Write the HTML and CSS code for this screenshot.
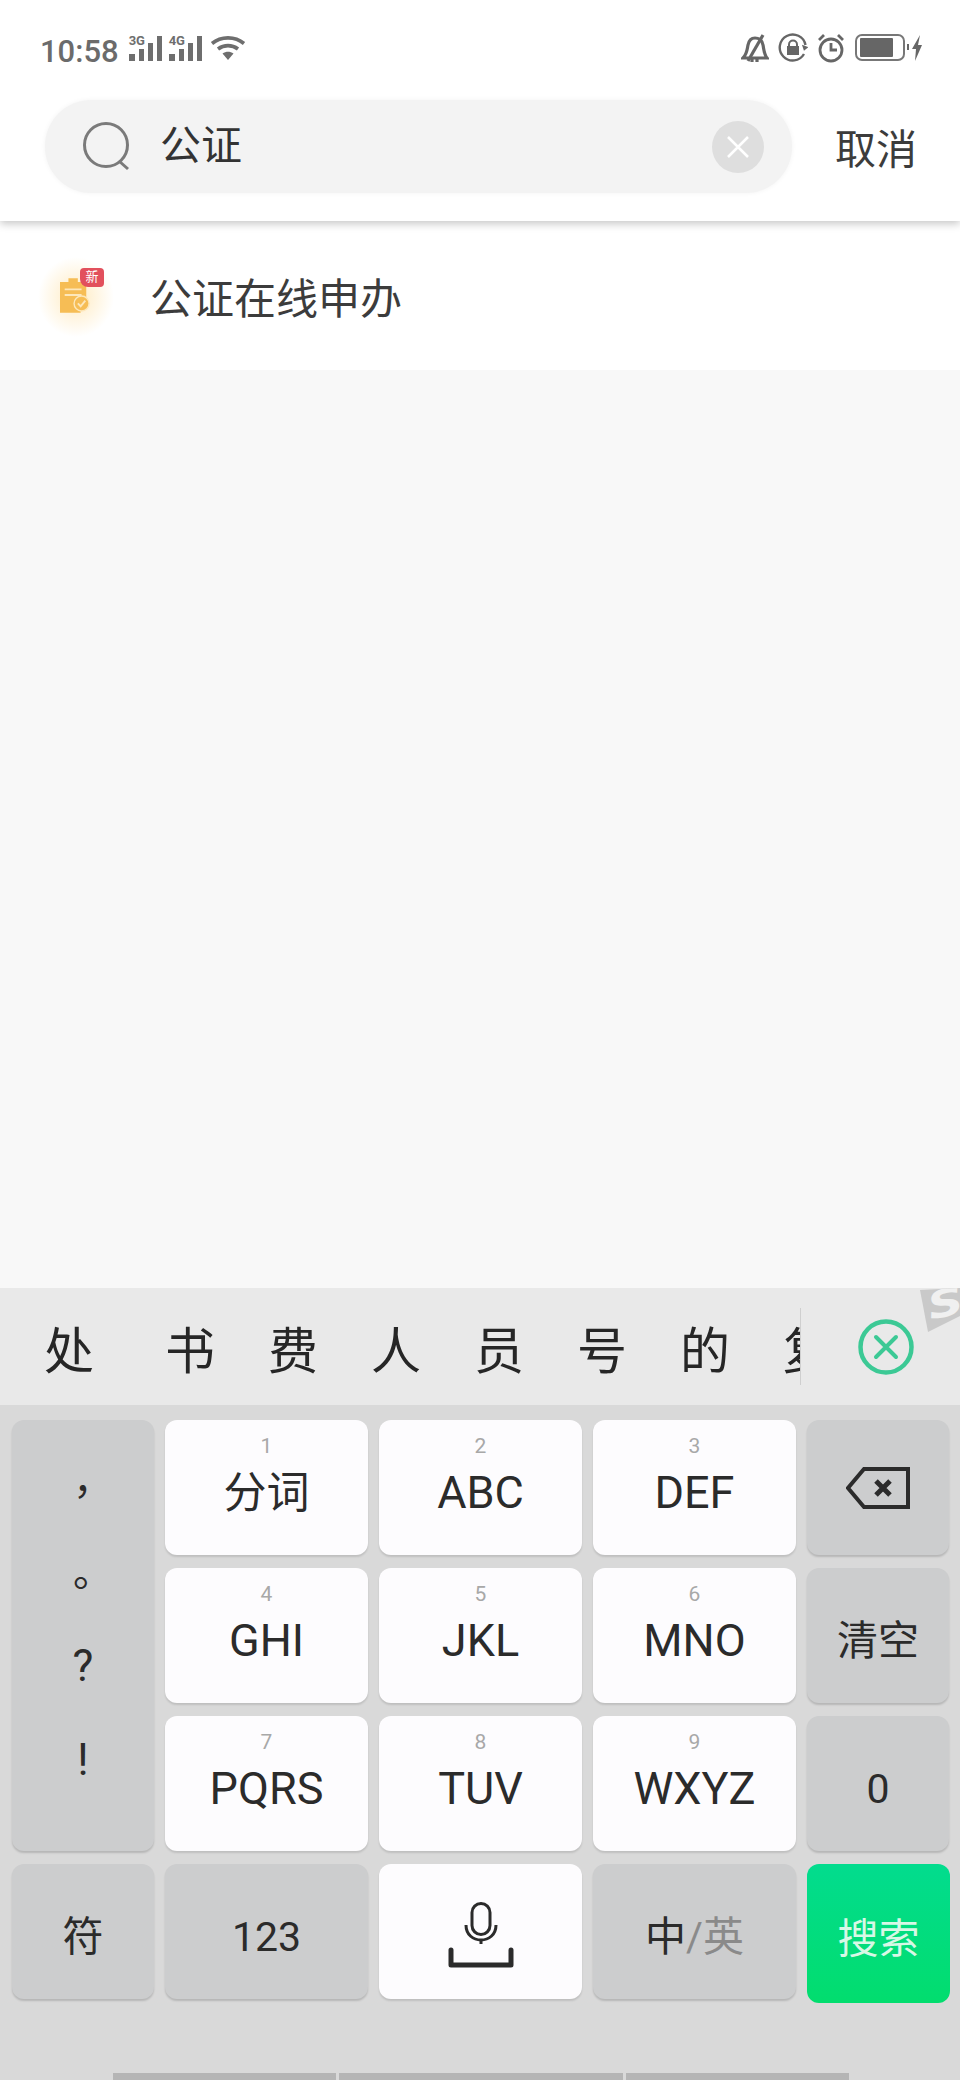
FILE: index.html
```html
<!DOCTYPE html>
<html lang="zh-CN">
<head>
  <meta charset="UTF-8" />
  <title>搜索</title>
  <link rel="stylesheet" href="styles.css">
</head>
<body>
  <div class="phone">
    <!-- Status bar and search box -->
    <header class="header">
      <div class="status">
        <div class="status-left">
          <span class="time">10:58</span>
          <span class="signal">
            <span class="net">3G</span>
            <svg width="33" height="25" viewBox="0 0 33 25"><g fill="#6e6e6e"><rect x="0" y="18" width="6" height="7"/><rect x="10" y="13" width="5" height="12"/><rect x="19" y="7" width="5" height="18"/><rect x="28" y="0" width="5" height="25"/></g></svg>
          </span>
          <span class="signal">
            <span class="net">4G</span>
            <svg width="33" height="25" viewBox="0 0 33 25"><g fill="#6e6e6e"><rect x="0" y="18" width="6" height="7"/><rect x="10" y="13" width="5" height="12"/><rect x="19" y="7" width="5" height="18"/><rect x="28" y="0" width="5" height="25"/></g></svg>
          </span>
          <svg class="wifi" width="36" height="26" viewBox="0 0 36 26"><g fill="none" stroke="#6e6e6e" stroke-width="3.600"><path d="M2 8.500C11 1 25 1 34 8.500"/><path d="M8 14C14 9.500 22 9.500 28 14"/></g><path d="M12.500 18.500C16 16 20 16 23.500 18.500L18 25Z" fill="#6e6e6e"/></svg>
        </div>
        <div class="status-right">
          <svg width="28" height="30" viewBox="0 0 28 30"><g fill="none" stroke="#666" stroke-width="3.200"><path d="M2 25C6 21 6 17 7 12C8 7 11 5 14 5C18 5 21 7 22 12C23 17 23 21 26 25Z"/><path d="M11 25V29M16 25V29"/><path d="M22 2L7 28"/></g></svg>
          <svg width="30" height="30" viewBox="0 0 30 30"><path d="M26 21A13 13 0 1 1 27.500 12" fill="none" stroke="#666" stroke-width="2.400"/><path d="M23 13L30 13L27 18Z" fill="#666" transform="rotate(20 27 15)"/><path d="M11 11.500a4 4 0 0 1 8 0V14H11Z" fill="none" stroke="#666" stroke-width="2"/><rect x="9" y="13" width="12" height="9" fill="#666"/></svg>
          <svg width="28" height="30" viewBox="0 0 28 30"><g fill="none" stroke="#666" stroke-width="2.800"><circle cx="14" cy="17" r="11"/><path d="M14 10V17H20"/><path d="M2 7L7 2M26 7L21 2"/></g></svg>
          <svg class="battery" width="68" height="28" viewBox="0 0 68 28"><rect x="1" y="1" width="48" height="25" rx="6" fill="none" stroke="#777" stroke-width="2"/><rect x="5" y="4" width="33" height="19" rx="1" fill="#666"/><rect x="52" y="10" width="2" height="6" fill="#666"/><path d="M65 1L57 15H61L60 27L67 11H63Z" fill="#666"/></svg>
        </div>
      </div>
      <div class="search-row">
        <div class="search-box">
          <svg class="search-icon" width="48" height="50" viewBox="0 0 48 50"><circle cx="23" cy="23" r="21.500" fill="none" stroke="#7a7a7a" stroke-width="3"/><path d="M36 39L45 47" stroke="#7a7a7a" stroke-width="3"/></svg>
          <span class="search-text">公证</span>
          <span class="search-clear">
            <svg width="26" height="26" viewBox="0 0 26 26"><path d="M3 3L23 23M23 3L3 23" stroke="#fff" stroke-width="2.500"/></svg>
          </span>
        </div>
        <span class="cancel">取消</span>
      </div>
    </header>

    <!-- Search result -->
    <div class="result">
      <span class="result-icon">
        <svg width="30" height="36" viewBox="0 0 32 38"><path d="M0 5H9V1H19V5H28V26H22V38H0Z" fill="#f6bd55"/><path d="M5 13H23M5 19H23" stroke="#fde7ba" stroke-width="2"/><circle cx="23" cy="28" r="8" fill="#f6bd55" stroke="#fde7ba" stroke-width="1.500"/><path d="M19 28L22 31L27 25" fill="none" stroke="#fde7ba" stroke-width="2"/></svg>
        <span class="new-badge">新</span>
      </span>
      <span class="result-text">公证在线申办</span>
    </div>

    <div class="blank"></div>

    <!-- Keyboard -->
    <section class="keyboard">
      <span class="watermark"><span>S</span></span>
      <div class="candidates">
        <div class="candidate-list">
          <span class="c1">处</span>
          <span>书</span>
          <span>费</span>
          <span>人</span>
          <span>员</span>
          <span>号</span>
          <span>的</span>
          <span>复</span>
        </div>
        <div class="candidate-close">
          <svg width="56" height="56" viewBox="0 0 56 56"><circle cx="28" cy="28" r="25.500" fill="none" stroke="#3cc995" stroke-width="4.500"/><path d="M18 18L38 38M38 18L18 38" stroke="#3cc995" stroke-width="4" stroke-linecap="round"/></svg>
        </div>
      </div>
      <div class="keys">
        <div class="key gray punct">
          <span class="comma">，</span>
          <span class="stop">。</span>
          <span class="ask">?</span>
          <span class="bang">!</span>
        </div>
        <div class="key"><small>1</small><b class="wide">分词</b></div>
        <div class="key"><small>2</small><b class="latin">ABC</b></div>
        <div class="key"><small>3</small><b class="latin">DEF</b></div>
        <div class="key gray">
          <svg width="64" height="42" viewBox="0 0 64 42"><path d="M18 2H62V40H18L2 21Z" fill="none" stroke="#2b2b2b" stroke-width="4"/><path d="M30 14L44 28M44 14L30 28" stroke="#2b2b2b" stroke-width="5"/></svg>
        </div>
        <div class="key"><small>4</small><b class="latin">GHI</b></div>
        <div class="key"><small>5</small><b class="latin">JKL</b></div>
        <div class="key"><small>6</small><b class="latin">MNO</b></div>
        <div class="key gray"><b>清空</b></div>
        <div class="key"><small>7</small><b class="latin">PQRS</b></div>
        <div class="key"><small>8</small><b class="latin">TUV</b></div>
        <div class="key"><small>9</small><b class="latin">WXYZ</b></div>
        <div class="key gray"><b>0</b></div>
        <div class="key gray"><b>符</b></div>
        <div class="key gray"><b>123</b></div>
        <div class="key">
          <svg class="mic" width="66" height="66" viewBox="0 0 66 66"><g fill="none" stroke="#2b2b2b"><rect x="24" y="1.500" width="18" height="31" rx="9" stroke-width="3"/><path d="M18 23C18 43 48 43 48 23" stroke-width="3"/><path d="M33 38V42" stroke-width="3"/><path d="M3 48V63H63V48" stroke-width="5" stroke-linecap="round" stroke-linejoin="round"/></g></svg>
        </div>
        <div class="key gray"><b>中<i>/英</i></b></div>
        <div class="key search-key"><b>搜索</b></div>
      </div>
      <div class="bottom-bars">
        <span class="bar-a"></span>
        <span class="bar-b"></span>
        <span class="bar-c"></span>
      </div>
    </section>
  </div>
</body>
</html>
```

FILE: styles.css
```css
/* Reset and basic styles */
* {
  box-sizing: border-box;
  margin: 0;
  padding: 0;
}
body {
  background: #f8f8f8;
  font-family: Roboto, "Noto Sans CJK SC", sans-serif;
  color: #333;
}
.phone {
  width: 960px;
  height: 2080px;
  display: flex;
  flex-direction: column;
  overflow: hidden;
}
/* Header */
.header {
  height: 221px;
  background: #fff;
  box-shadow: 0 3px 8px rgba(0, 0, 0, 0.22);
  position: relative;
  z-index: 1;
  flex: none;
}
.status {
  height: 100px;
  padding: 30px 37px 0 40px;
  display: flex;
  justify-content: space-between;
  align-items: flex-start;
}
.status-left,
.status-right {
  display: flex;
  align-items: center;
  height: 36px;
}
.status-right {
  gap: 9px;
}
.status-right .battery {
  margin-left: 1px;
}
.time {
  font-size: 31px;
  font-weight: 500;
  color: #6b6b6b;
  margin: 6px 10px 0 0;
}
.signal {
  position: relative;
  width: 40px;
  height: 25px;
  display: block;
}
.signal svg {
  display: block;
}
.net {
  position: absolute;
  left: 0;
  top: -1px;
  font-size: 13px;
  font-weight: 700;
  color: #6e6e6e;
  line-height: 12px;
}
.wifi {
  margin-left: 1px;
}
.search-row {
  display: flex;
  align-items: center;
  padding-left: 45px;
}
.search-box {
  width: 747px;
  height: 93px;
  background: #f3f3f3;
  box-shadow: 0 0 5px #f3f3f3;
  border-radius: 46px;
  display: flex;
  align-items: center;
  padding: 0 28px 0 38px;
}
.search-icon {
  margin-right: 29px;
}
.search-text {
  font-size: 41px;
  line-height: 48px;
  margin-top: -2px;
  color: #333;
  flex: 1;
}
.search-clear {
  width: 52px;
  height: 52px;
  border-radius: 50%;
  background: #dedede;
  display: flex;
  align-items: center;
  justify-content: center;
}
.cancel {
  margin: -2px 0 0 43px;
  font-size: 41px;
  color: #3c3c3c;
}
/* Result row */
.result {
  height: 149px;
  padding: 0 0 0 52px;
  background: #fff;
  display: flex;
  align-items: center;
  flex: none;
}
.result-icon {
  position: relative;
  width: 48px;
  height: 62px;
  padding: 12px 0 0 8px;
  margin-right: 50px;
}
.result-icon::before {
  content: "";
  position: absolute;
  left: -14px;
  top: -8px;
  width: 76px;
  height: 80px;
  border-radius: 50%;
  background: radial-gradient(closest-side, rgba(255, 214, 130, 0.5), rgba(255, 236, 200, 0));
}
.result-icon svg {
  position: relative;
  display: block;
}
.new-badge {
  position: absolute;
  left: 28px;
  top: 3px;
  width: 24px;
  height: 19px;
  border-radius: 4px 4px 4px 8px;
  background: #e2505c;
  color: #fff;
  font-size: 13px;
  line-height: 18px;
  text-align: center;
}
.result-text {
  font-size: 42px;
  color: #3c3c3c;
}
.blank {
  flex: 1;
  background: #f8f8f8;
}
/* Keyboard */
.keyboard {
  height: 792px;
  background: #d9d9d9;
  position: relative;
  flex: none;
}
.watermark {
  position: absolute;
  right: 0;
  top: 0;
  width: 40px;
  height: 44px;
  background: #c9c9c9;
  clip-path: polygon(0 2px, 100% 0, 100% 28px, 8px 100%);
  overflow: hidden;
}
.watermark span {
  display: block;
  margin-left: 8px;
  color: #f0f0f0;
  font-family: "DejaVu Sans", sans-serif;
  font-size: 38px;
  font-weight: 700;
  font-style: italic;
  line-height: 38px;
  transform: rotate(-12deg) scaleX(1.3);
  transform-origin: left center;
}
.candidates {
  height: 117px;
  background: #e9e9e9;
  display: flex;
}
.candidate-list {
  width: 800px;
  overflow: hidden;
  white-space: nowrap;
  display: flex;
  align-items: center;
  padding-left: 44px;
  font-size: 50px;
  color: #262626;
}
.candidate-list span {
  flex: none;
  width: 50px;
  margin-right: 53px;
  text-align: center;
}
.candidate-list .c1 {
  margin-right: 71px;
}
.candidate-close {
  position: relative;
  flex: 1;
  display: flex;
  align-items: center;
  padding-left: 58px;
}
.candidate-close::before {
  content: "";
  position: absolute;
  left: 0;
  top: 20px;
  bottom: 20px;
  width: 1px;
  background: #cfcfcf;
}
.keys {
  display: grid;
  grid-template-columns: 142px 203px 203px 203px 142px;
  grid-auto-rows: 135px;
  column-gap: 11px;
  row-gap: 13px;
  padding: 15px 0 0 12px;
}
.key {
  background: #fdfcfe;
  border-radius: 12px;
  box-shadow: 0 2px 2px rgba(0, 0, 0, 0.12);
  display: flex;
  flex-direction: column;
  align-items: center;
  justify-content: center;
  position: relative;
}
.key b {
  font-weight: 400;
  font-size: 41px;
  line-height: 48px;
  color: #2b2b2b;
  margin-top: 11px;
}
.key b.latin {
  font-size: 45px;
}
.key b.wide {
  font-size: 43px;
}
.key small {
  position: absolute;
  top: 13px;
  left: 0;
  right: 0;
  text-align: center;
  font-size: 21px;
  line-height: 26px;
  color: #a8a8a8;
}
.key.gray {
  background: #cccdce;
  box-shadow: 0 2px 2px rgba(0, 0, 0, 0.16);
}
.key i {
  font-style: normal;
  color: #8a8a8a;
}
.punct {
  grid-row: span 3;
  justify-content: flex-start;
  color: #2b2b2b;
}
.punct span {
  position: absolute;
  left: 0;
  right: 0;
  text-align: center;
  line-height: 60px;
  font-size: 44px;
}
.punct .comma,
.punct .stop {
  font-family: "Noto Sans CJK SC", sans-serif;
  font-size: 40px;
  padding-left: 20px;
}
.punct .comma {
  top: 27px;
}
.punct .stop {
  top: 119px;
}
.punct .ask {
  top: 216px;
}
.punct .bang {
  top: 310px;
}
.search-key {
  background: linear-gradient(#02dc8e, #02dd6e);
  box-shadow: none;
  margin: 0 -1px -4px 0;
}
.search-key b {
  color: #d7f8e6;
}
.mic {
  margin-top: 7px;
}
.bottom-bars {
  position: absolute;
  left: 113px;
  bottom: 0;
  display: flex;
  gap: 3px;
  height: 7px;
}
.bottom-bars span {
  background: #b5b5b5;
  display: block;
}
.bar-a {
  width: 223px;
}
.bar-b {
  width: 284px;
}
.bar-c {
  width: 223px;
}
```
